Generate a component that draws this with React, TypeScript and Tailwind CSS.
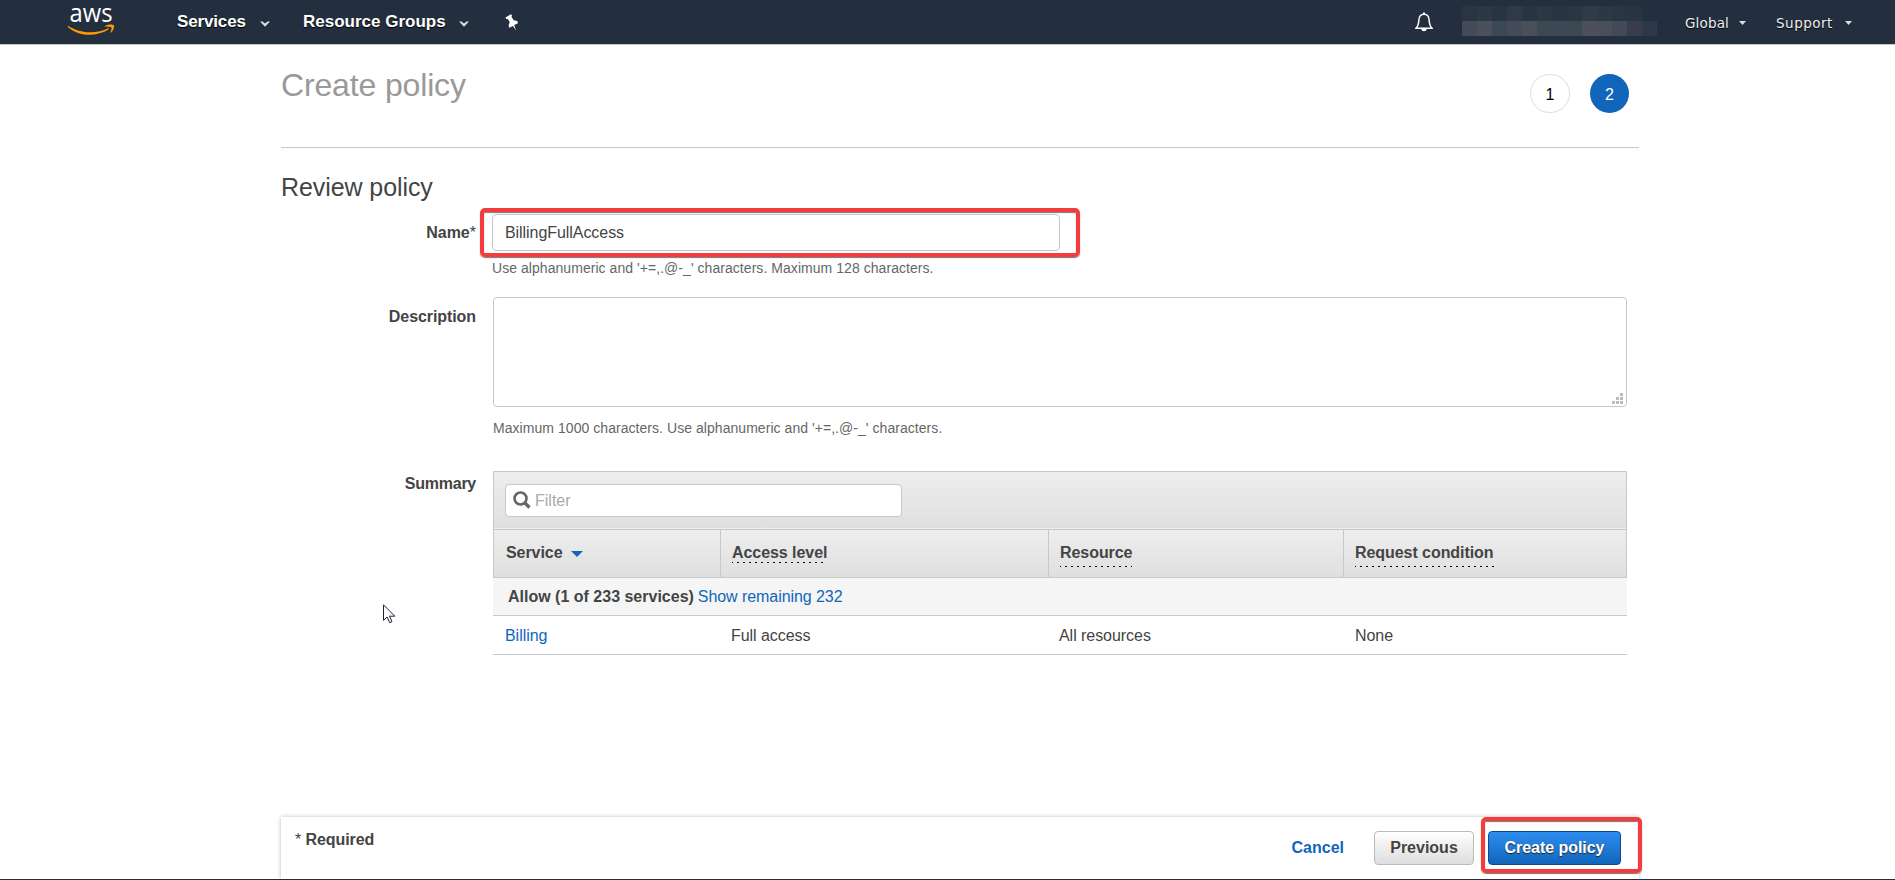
import { useState } from "react"

interface Column {
  label: string
  className: string
  underlineClass: string
}

const columns: Column[] = [
  { label: "Access level", className: "pl-[11px]", underlineClass: "mt-[-3px]" },
  { label: "Resource", className: "pl-[11px]", underlineClass: "mt-px" },
  { label: "Request condition", className: "pl-[11px]", underlineClass: "mt-px" },
]

const maskRows: string[][] = [
  ["#293541", "#2c3844", "#293442", "#303947", "#293442", "#2c3743", "#293441", "#2b3643", "#2f3b47", "#2c3844", "#293542", "#293442", "#232f3f"],
  ["#454a58", "#4b505a", "#3d4855", "#434a58", "#4a4f58", "#3c4853", "#3c4853", "#3c4953", "#4b505a", "#4a4f5b", "#444957", "#383c4b", "#2d3848"],
]

function AwsLogo() {
  return (
    <svg width="48" height="36" viewBox="0 0 48 36" className="shrink-0 overflow-visible">
      <text
        x="2.5"
        y="22.3"
        fill="#fff"
        fontFamily="'Open Sans', sans-serif"
        fontSize="25"
        fontWeight="500"
        textLength="43"
        lengthAdjust="spacingAndGlyphs"
      >
        aws
      </text>
      <path d="M1 25.700C12.500 33.300 29 34.600 41.500 28L41.800 29.300C29.500 37.200 12 36.800.7 26.900Z" fill="#f90" />
      <path d="M37.300 26.500C40 24.300 45.500 24 47 25.200C47.600 27.500 46 31.200 43.400 33.300C43.800 30.800 45 28.500 44.400 27.200C42.500 26.600 39.500 27 37.300 26.500Z" fill="#f90" />
    </svg>
  )
}

function NavCaret() {
  return (
    <svg width="10" height="6" viewBox="0 0 10 6" className="shrink-0">
      <path d="M0 .5h2.500L5 2.500 7.500.5H10L5 5.800Z" fill="#ddd" />
    </svg>
  )
}

function SmallCaret() {
  return (
    <svg width="7" height="4" viewBox="0 0 7 4" className="shrink-0">
      <path d="M0 0h7L3.500 4Z" fill="#ddd" />
    </svg>
  )
}

function PinIcon() {
  return (
    <svg width="14" height="17" viewBox="0 0 14 17" className="shrink-0">
      <path
        d="M.5 3.500 6 .2 7 1.400 6.500 2.900 8.800 6.200 12.300 7.100 13 9.200 9.200 10.900 11 16.500 8 11.900 4.200 13.800 3.500 11.300 4.800 8.200 2.800 4.900 1.200 5Z"
        fill="#fff"
      />
    </svg>
  )
}

function BellIcon() {
  return (
    <svg width="18" height="20" viewBox="0 0 18 20" fill="none" className="shrink-0">
      <path d="M1 16.200C3 14.300 3.600 12.500 3.800 8.500C4 4.500 5.800 2.300 9 2.300S14 4.500 14.200 8.500C14.400 12.500 15 14.300 17 16.200Z" stroke="#fff" strokeWidth="1.500" />
      <path d="M8 .5h2v2H8ZM6.300 17h5.400C11.400 20 6.600 20 6.300 17Z" fill="#fff" />
    </svg>
  )
}

function Header() {
  return (
    <header className="flex h-[45px] shrink-0 items-start border-b border-[#c8c8c8] bg-[#232f3f] text-white">
      <div className="ml-[67px]">
        <AwsLogo />
      </div>
      <div className="ml-[62px] flex h-[43px] items-center text-[17px] font-bold text-shadow-[0_1px_1px_#000]">
        <span className="w-[69px] whitespace-nowrap tracking-[-0.15px]">Services</span>
        <div className="ml-[14px] mt-1">
          <NavCaret />
        </div>
        <span className="ml-[33px] w-[143px] whitespace-nowrap">Resource Groups</span>
        <div className="ml-[13px] mt-1">
          <NavCaret />
        </div>
        <div className="ml-[36px] mt-px">
          <PinIcon />
        </div>
      </div>
      <div className="ml-auto mr-[43px] flex h-[44px] items-center font-['DejaVu_Sans',sans-serif] text-[13.5px] text-[#eee] text-shadow-[0_1px_1px_#000]">
        <BellIcon />
        <div className="ml-[29px] mt-[-2px]">
          {maskRows.map((row, index) => (
            <div key={index} className="flex">
              {row.map((color, i) => (
                <div key={i} className="h-[15px] w-[15px]" style={{ backgroundColor: color }} />
              ))}
            </div>
          ))}
        </div>
        <span className="ml-[28px] mt-px w-[44px] whitespace-nowrap tracking-[0.15px]">Global</span>
        <div className="ml-[10px] mt-[2px]">
          <SmallCaret />
        </div>
        <span className="ml-[30px] mt-px w-[59px] whitespace-nowrap tracking-[0.5px]">Support</span>
        <div className="ml-[10px] mt-[2px]">
          <SmallCaret />
        </div>
      </div>
    </header>
  )
}

function Steps() {
  return (
    <div className="mr-[10px] mt-[29px] flex gap-5 text-[16px]">
      <div className="flex h-[39px] w-10 items-center justify-center rounded-full border border-[#ddd] pt-[2px] text-black">1</div>
      <div className="flex h-[39px] w-[39px] items-center justify-center rounded-full bg-[#1166bb] pt-[2px] text-white">2</div>
    </div>
  )
}

function SummaryTable() {
  return (
    <div className="w-[1134px]">
      <div className="h-[58px] border border-b-0 border-[#c8c8c8] bg-linear-to-b from-[#eee] to-[#dfdfdf] pl-[11px] pt-3 shadow-[inset_0_-1px_0_#eee]">
        <div className="flex h-[33px] w-[397px] items-center rounded-[4px] border border-[#c8c8c8] bg-white pl-[7px]">
          <svg width="18" height="18" viewBox="0 0 18 18" fill="none" stroke="#666" className="mb-[2px] shrink-0">
            <circle cx="7.500" cy="7.500" r="6" strokeWidth="2.600" />
            <path d="m12 12 4.500 4.500" strokeWidth="3.200" />
          </svg>
          <input className="ml-1 w-[340px] text-[16px] outline-none placeholder:text-[#aaa]" placeholder="Filter" />
        </div>
      </div>

      <div className="grid h-[49px] grid-cols-[226px_328px_295px_283px] border border-[#c8c8c8] bg-linear-to-b from-[#eee] to-[#dfdfdf] font-bold tracking-[-0.06px]">
        <div className="flex pl-3 pt-[11px]">
          Service
          <svg width="12" height="6" viewBox="0 0 12 6" className="ml-[8px] mt-[10px]">
            <path d="M0 0h12L6 6Z" fill="#16b" />
          </svg>
        </div>
        {columns.map((col) => (
          <div key={col.label} className={`flex items-start border-l border-[#c8c8c8] pt-[11px] ${col.className}`}>
            <div>
              {col.label}
              <div className={`h-px bg-[repeating-linear-gradient(90deg,#000_0_1px,transparent_1px_5px,#000_5px_6px)] ${col.underlineClass}`} />
            </div>
          </div>
        ))}
      </div>

      <div className="flex h-[38px] items-center border-b border-[#c8c8c8] bg-[#f5f5f5] pl-[15px]">
        <b>Allow (1 of 233 services)</b>
        <a className="ml-1 tracking-[-0.07px] text-[#16b]">Show remaining 232</a>
      </div>

      <div className="grid h-[39px] grid-cols-[226px_328px_296px_284px] items-center border-b border-[#c8c8c8] pt-[2px] tracking-[-0.05px]">
        <a className="pl-3 text-[#16b]">Billing</a>
        <span className="pl-3">Full access</span>
        <span className="pl-3">All resources</span>
        <span className="pl-3">None</span>
      </div>
    </div>
  )
}

function ResizeGrip() {
  return (
    <svg width="11" height="11" viewBox="0 0 11 11" fill="#bbb" className="absolute bottom-[3px] right-1">
      <path d="M8 0h3v3H8ZM4 4h3v3H4ZM8 4h3v3H8ZM0 8h3v3H0ZM4 8h3v3H4ZM8 8h3v3H8Z" />
    </svg>
  )
}

export default function App() {
  const [name, setName] = useState("BillingFullAccess")

  return (
    <div className="relative flex h-[880px] w-[1895px] flex-col overflow-hidden border-b border-[#232f3f] bg-white font-['Liberation_Sans',Arial,sans-serif] text-[16px] leading-[24px] text-[#444]">
      <Header />

      <main className="ml-[281px] w-[1358px] flex-1">
        <div className="flex h-[103px] justify-between border-b border-[#c8c8c8]">
          <h1 className="mt-[20px] text-[32px] leading-[40px] tracking-[-0.15px] text-[#999]">Create policy</h1>
          <Steps />
        </div>

        <h2 className="mt-[23px] text-[25px] leading-[32px] tracking-[-0.08px]">Review policy</h2>

        <div className="mt-[11px] flex h-[83px]">
          <div className="w-[195px] pt-[7px] text-right font-bold">
            Name<span className="font-normal">*</span>
          </div>
          <div className="ml-4">
            <div className="relative w-[568px]">
              <input
                value={name}
                onChange={(e) => setName(e.target.value)}
                className="block h-[37px] w-[568px] rounded-[4px] border border-[#c8c8c8] px-3 tracking-[-0.06px] outline-none"
              />
              <div className="pointer-events-none absolute -left-3 -top-1.5 h-[49px] w-[600px] rounded-[5px] border-4 border-[#f53b3b] shadow-[0_1px_1px_#777,inset_0_1px_1px_#777]" />
            </div>
            <p className="mt-[7px] text-[14px] leading-[20px] tracking-[0.05px] text-[#666]">
              Use alphanumeric and '+=,.@-_' characters. Maximum 128 characters.
            </p>
          </div>
        </div>

        <div className="flex h-[174px]">
          <div className="w-[195px] pt-[8px] text-right font-bold tracking-[-0.08px]">Description</div>
          <div className="ml-[17px]">
            <div className="relative h-[110px] w-[1134px]">
              <textarea className="block h-full w-full resize-none rounded-[4px] border border-[#c8c8c8] outline-none" />
              <ResizeGrip />
            </div>
            <p className="mt-[11px] text-[14px] leading-[20px] tracking-[0.05px] text-[#666]">
              Maximum 1000 characters. Use alphanumeric and '+=,.@-_' characters.
            </p>
          </div>
        </div>

        <div className="flex">
          <div className="w-[195px] pt-px text-right font-bold tracking-[-0.25px]">Summary</div>
          <div className="ml-[17px]">
            <SummaryTable />
          </div>
        </div>
      </main>

      <footer className="ml-[281px] flex h-[62px] w-[1358px] shrink-0 items-start bg-white pl-[14px] font-bold shadow-[0_0_4px_#bbb]">
        <div className="mt-[11px] tracking-[-0.08px]">
          <span className="font-normal">*</span> Required
        </div>
        <button className="ml-auto mt-[14px] h-[34px] text-[#16b]">Cancel</button>
        <button className="ml-[30px] mt-[14px] h-[34px] w-[100px] rounded-[4px] border border-[#bbb] bg-linear-to-b from-white to-[#ddd]">
          Previous
        </button>
        <div className="relative ml-[14px] mr-[18px] mt-[14px]">
          <button className="h-[34px] w-[133px] rounded-[4px] border border-[#0b4a8b] bg-linear-to-b from-[#2e8df0] to-[#1166bb] tracking-[-0.05px] text-white text-shadow-[0_1px_1px_#222]">
            Create policy
          </button>
          <div className="pointer-events-none absolute -left-[7px] -top-[14px] h-[56px] w-[161px] rounded-[5px] border-4 border-[#f53b3b] shadow-[0_1px_1px_#777,inset_0_1px_1px_#777]" />
        </div>
      </footer>

      {/* mouse pointer */}
      <svg width="13" height="20" viewBox="0 0 13 20" className="absolute left-[383px] top-[604px]">
        <path d="M.5.8v15.500l3.600-3.300 2.600 5.700 2.300-1-2.500-5.500h5.300Z" fill="#fff" stroke="#223" strokeWidth="1" />
      </svg>
    </div>
  )
}
